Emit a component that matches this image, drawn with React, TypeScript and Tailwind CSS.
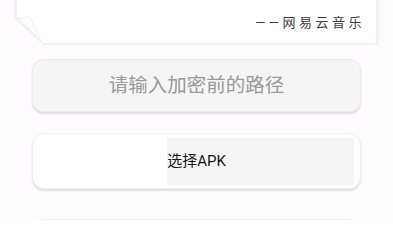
import React from "react";

export default function App() {
  return (
    <div className="w-[393px] h-[221px] overflow-hidden bg-[#fffbfe] flex flex-col font-['Roboto','Noto_Sans_CJK_SC',sans-serif]">
      {/* top card */}
      <div className="relative mx-[14px] h-[45px] shrink-0">
        <div className="absolute inset-0 bg-[#f4f1f3] [clip-path:polygon(0_0,100%_0,100%_100%,29px_100%,0_18px)]" />
        <div className="absolute left-[3px] top-0 right-[3px] bottom-[2px] bg-white [clip-path:polygon(0_0,100%_0,100%_100%,26px_100%,0_17px)]" />
        <svg className="absolute left-[3px] top-[14px]" width="30" height="30" viewBox="0 0 30 30">
          <path d="M1 4 L13 3 L24 27 Z" fill="#fdfdfd" stroke="#f3f1f3" strokeWidth="1" />
        </svg>
        <div className="relative h-full flex items-center justify-end pr-[14px] pt-[1px] text-[13px] tracking-[3.5px] text-[#3a3a3a]">
          ——网易云音乐
        </div>
      </div>
      {/* input */}
      <div className="mx-[32px] mt-[14px] h-[53px] shrink-0 rounded-[11px] bg-[#f5f5f5] border border-[#ececec] shadow-[0_2px_2px_rgba(0,0,0,0.12)] flex items-center justify-center text-[19.5px] text-[#999999]">
        请输入加密前的路径
      </div>
      {/* button */}
      <div className="relative mx-[32px] mt-[21px] h-[56px] shrink-0 rounded-[12px] bg-white border border-[#f0eef0] shadow-[0_2px_2px_rgba(0,0,0,0.12)] overflow-hidden flex items-center justify-center">
        <div className="absolute left-[134px] right-[6px] top-[4px] bottom-[3px] bg-[#f5f5f5]" />
        <span className="relative text-[15px] text-[#151515]">选择APK</span>
      </div>
      {/* next card peek */}
      <div className="mx-[32px] mt-[30px] h-[20px] shrink-0 rounded-t-[12px] bg-white border border-[#f3f1f3]" />
    </div>
  );
}
